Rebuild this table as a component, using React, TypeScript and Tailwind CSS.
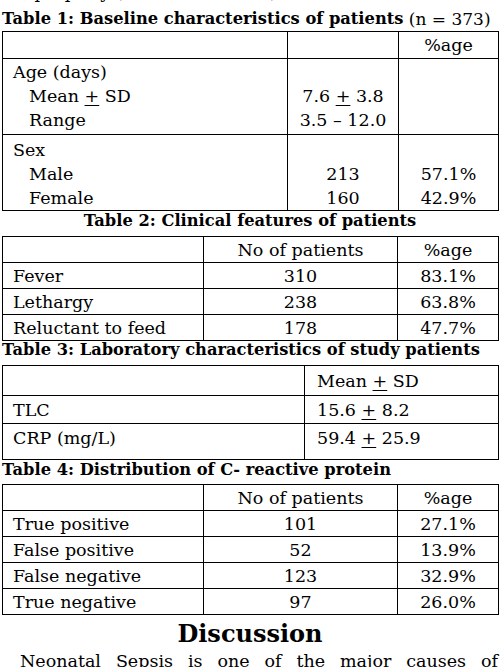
import React from "react";

const F = "font-['DejaVu_Serif',serif]";

function PM() {
  return <span className="underline underline-offset-[3px] decoration-1">+</span>;
}

function Cell({ className = "", children }: { className?: string; children?: React.ReactNode }) {
  return <div className={`border-r border-b border-black ${className}`}>{children}</div>;
}

export default function App() {
  return (
    <div className={`${F} w-[500px] h-[667px] overflow-hidden bg-white text-black text-[17.5px] leading-[24px]`}>
      {/* cut-off line at the very top */}
      <div className="h-[9px] overflow-hidden pl-[8px]">
        <div className="-mt-[20px] whitespace-nowrap">rt, properly (n = 213 and 160).</div>
      </div>

      {/* Table 1 title */}
      <div className="pl-[2px] h-[22px] flex items-end whitespace-nowrap text-[16.3px]">
        <span className="font-bold">Table 1: Baseline characteristics of patients</span>
        <span className="text-[17px]">&nbsp;(n = 373)</span>
      </div>

      {/* Table 1 */}
      <div className="ml-[2px] w-[497px] border-t border-l border-black grid grid-cols-[285px_111px_100px]">
        <Cell className="h-[27px]" />
        <Cell className="h-[27px]" />
        <Cell className="h-[27px] flex items-center justify-center">%age</Cell>

        <Cell className="h-[76px] pt-[1px]">
          <div className="pl-[10px]">Age (days)</div>
          <div className="pl-[26px]">Mean <PM /> SD</div>
          <div className="pl-[26px]">Range</div>
        </Cell>
        <Cell className="h-[76px] pt-[1px] text-center">
          <div>&nbsp;</div>
          <div>7.6 <PM /> 3.8</div>
          <div>3.5 – 12.0</div>
        </Cell>
        <Cell className="h-[76px]" />

        <Cell className="h-[76px] pt-[3px]">
          <div className="pl-[10px]">Sex</div>
          <div className="pl-[26px]">Male</div>
          <div className="pl-[26px]">Female</div>
        </Cell>
        <Cell className="h-[76px] pt-[3px] text-center">
          <div>&nbsp;</div>
          <div>213</div>
          <div>160</div>
        </Cell>
        <Cell className="h-[76px] pt-[3px] text-center">
          <div>&nbsp;</div>
          <div>57.1%</div>
          <div>42.9%</div>
        </Cell>
      </div>

      {/* Table 2 */}
      <div className="h-[25px] pb-[3px] flex items-end justify-center font-bold whitespace-nowrap text-[16.3px]">
        Table 2: Clinical features of patients
      </div>
      <div className="ml-[2px] w-[497px] border-t border-l border-black grid grid-cols-[201px_194px_101px]">
        {[
          ["", "No of patients", "%age"],
          ["Fever", "310", "83.1%"],
          ["Lethargy", "238", "63.8%"],
          ["Reluctant to feed", "178", "47.7%"],
        ].map((r, i) => (
          <React.Fragment key={i}>
            <Cell className="h-[26px] pl-[10px] flex items-center">{r[0]}</Cell>
            <Cell className="h-[26px] flex items-center justify-center">{r[1]}</Cell>
            <Cell className="h-[26px] flex items-center justify-center">{r[2]}</Cell>
          </React.Fragment>
        ))}
      </div>

      {/* Table 3 */}
      <div className="pl-[2px] h-[24px] pb-[3px] flex items-end font-bold whitespace-nowrap text-[16.3px]">
        Table 3: Laboratory characteristics of study patients
      </div>
      <div className="ml-[2px] w-[497px] border-t border-l border-black grid grid-cols-[302px_194px]">
        <Cell className="h-[30px]" />
        <Cell className="h-[30px] pl-[12px] flex items-center">
          <span>Mean <PM /> SD</span>
        </Cell>
        <Cell className="h-[28px] pl-[10px] flex items-center">TLC</Cell>
        <Cell className="h-[28px] pl-[12px] flex items-center">
          <span>15.6 <PM /> 8.2</span>
        </Cell>
        <Cell className="h-[36px] pl-[10px] pt-[2px]">CRP (mg/L)</Cell>
        <Cell className="h-[36px] pl-[12px] pt-[2px]">
          <span>59.4 <PM /> 25.9</span>
        </Cell>
      </div>

      {/* Table 4 */}
      <div className="pl-[2px] h-[24px] pb-[2px] flex items-end font-bold whitespace-nowrap text-[16.3px]">
        Table 4: Distribution of C- reactive protein
      </div>
      <div className="ml-[2px] w-[497px] border-t border-l border-black grid grid-cols-[201px_194px_101px]">
        {[
          ["", "No of patients", "%age"],
          ["True positive", "101", "27.1%"],
          ["False positive", "52", "13.9%"],
          ["False negative", "123", "32.9%"],
          ["True negative", "97", "26.0%"],
        ].map((r, i) => (
          <React.Fragment key={i}>
            <Cell className="h-[26px] pl-[10px] flex items-center">{r[0]}</Cell>
            <Cell className="h-[26px] flex items-center justify-center">{r[1]}</Cell>
            <Cell className="h-[26px] flex items-center justify-center">{r[2]}</Cell>
          </React.Fragment>
        ))}
      </div>

      {/* Discussion */}
      <div className="h-[34px] flex items-end justify-center font-bold text-[24px] leading-[30px]">
        Discussion
      </div>
      <div className="px-[2px] text-justify [text-align-last:justify] indent-[18px]">
        Neonatal Sepsis is one of the major causes of
      </div>
    </div>
  );
}
